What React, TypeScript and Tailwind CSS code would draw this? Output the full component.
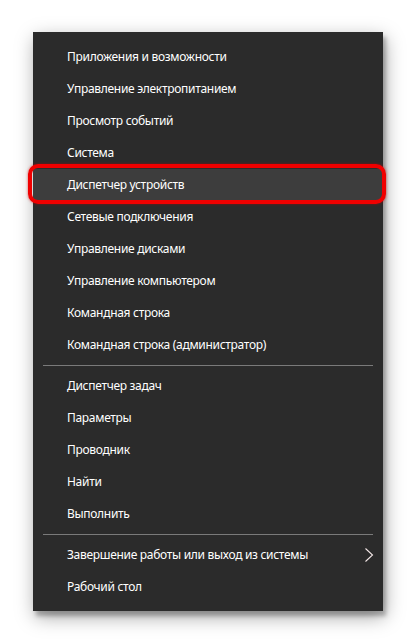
const groups: string[][] = [
  [
    'Приложения и возможности',
    'Управление электропитанием',
    'Просмотр событий',
    'Система',
    'Диспетчер устройств',
    'Сетевые подключения',
    'Управление дисками',
    'Управление компьютером',
    'Командная строка',
    'Командная строка (администратор)',
  ],
  ['Диспетчер задач', 'Параметры', 'Проводник', 'Найти', 'Выполнить'],
  ['Завершение работы или выход из системы', 'Рабочий стол'],
];

const HIGHLIGHTED = 'Диспетчер устройств';
const SUBMENU = 'Завершение работы или выход из системы';

function Chevron() {
  return (
    <svg width="10" height="15" viewBox="0 0 10 15" fill="none" className="absolute right-[9px] top-1/2 -translate-y-1/2">
      <path d="M1.5 1L8.5 7.5L1.5 14" stroke="#f2e6e6" strokeWidth="1.1" />
    </svg>
  );
}

function MenuItem({ label }: { label: string }) {
  const active = label === HIGHLIGHTED;
  return (
    <div className={`relative flex h-8 items-center pl-[34px] ${active ? 'bg-[#3d3d3d]' : ''}`}>
      <span className="text-[12px] tracking-[-0.3px] text-white">{label}</span>
      {label === SUBMENU && <Chevron />}
      {/* red marker around the selected row */}
      {active && (
        <div className="pointer-events-none absolute -top-[5px] -bottom-[3px] -left-[5px] -right-[3px] rounded-[10px] border-4 border-[#f00000] shadow-[0_0_3px_rgba(200,0,0,0.6)]" />
      )}
    </div>
  );
}

export default function App() {
  return (
    <div className="h-[644px] w-[416px] bg-white pt-[32px] pl-[33px]" style={{ fontFamily: '"Noto Sans", "Open Sans", sans-serif' }}>
      <div className="w-[350px] bg-[#2b2b2b] pt-[9px] pb-2 shadow-[3px_5px_4px_rgba(0,0,0,0.25),2px_6px_18px_rgba(0,0,0,0.35)]">
        {groups.map((group, i) => (
          <div key={i}>
            {i > 0 && <div className="mx-[10px] my-1 h-px bg-[#7a7a7a]" />}
            {group.map((label) => (
              <MenuItem key={label} label={label} />
            ))}
          </div>
        ))}
      </div>
    </div>
  );
}
